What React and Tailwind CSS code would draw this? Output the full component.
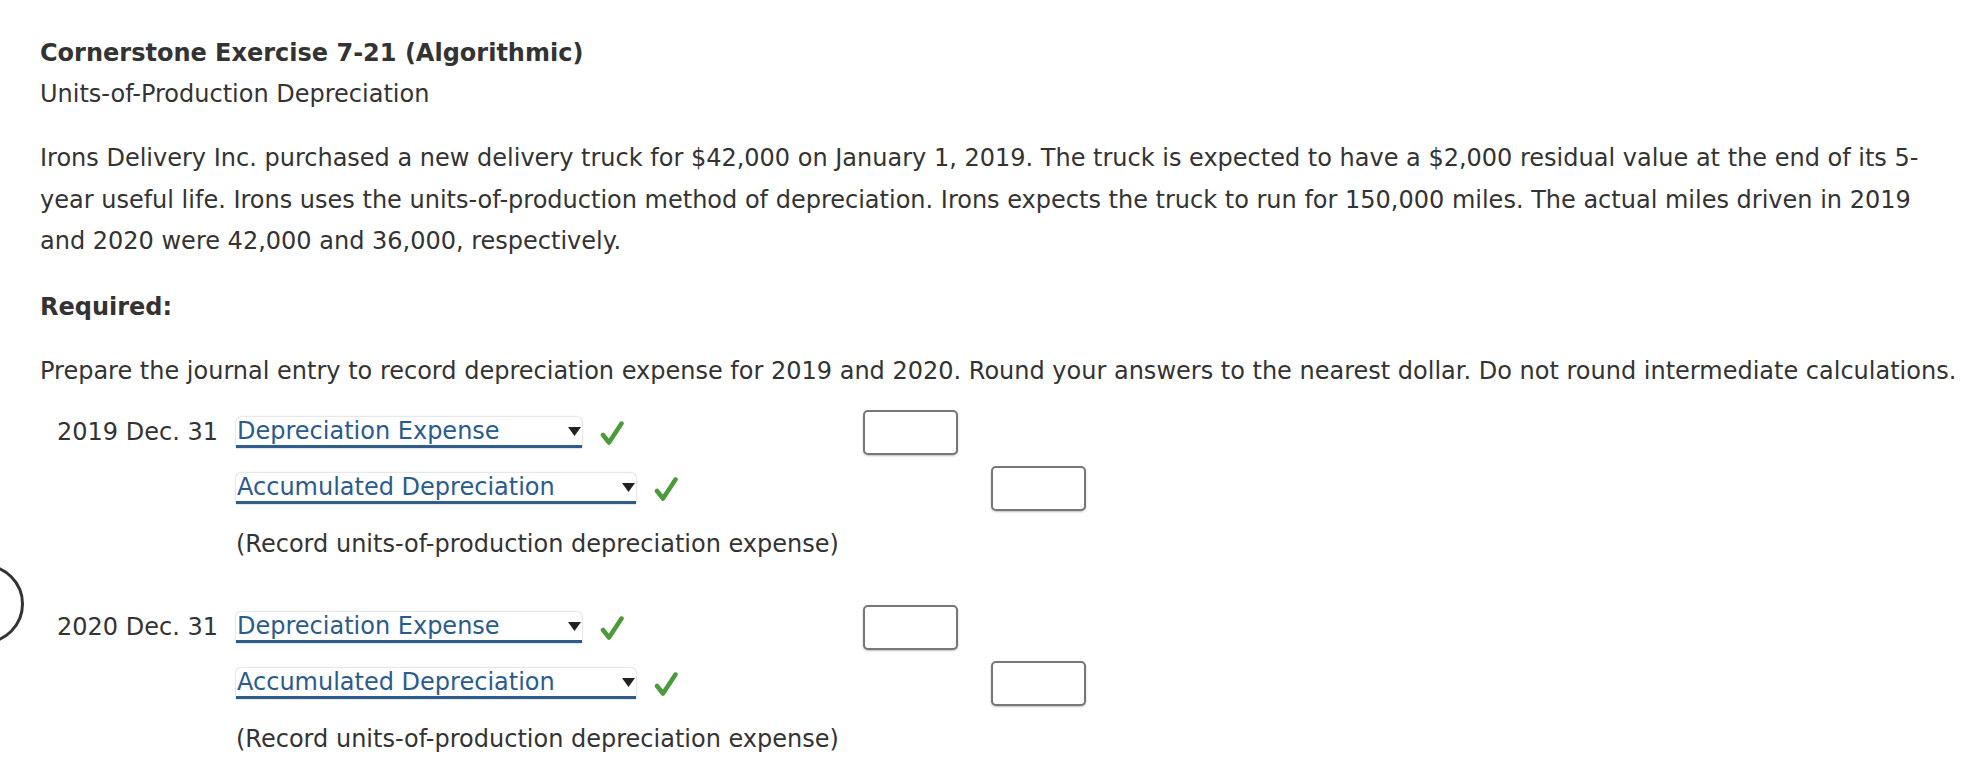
const Check = () => (
  <svg width="24" height="26" viewBox="0 0 24 26" className="shrink-0">
    <path
      d="M3 15 L9 22.5 L21.5 3.5"
      fill="none"
      stroke="#4b9a3c"
      strokeWidth="4.5"
      strokeLinecap="round"
      strokeLinejoin="round"
    />
  </svg>
);

const Select = ({ label, width }) => (
  <div
    className={`flex h-[31px] items-center justify-between rounded-t-[5px] border-b-[3px] border-[#2e5d8c] bg-white shadow-[0_0_2px_rgba(0,0,0,0.35)] ${width}`}
  >
    <span className="pl-[1px] text-[24px] leading-[28px] text-[#2a5b8d]">{label}</span>
    <svg width="13" height="9" viewBox="0 0 13 9" className="mr-[1px]">
      <path d="M0 0 H13 L6.5 9 Z" fill="#222" />
    </svg>
  </div>
);

const AmountBox = () => (
  <div className="h-[45px] w-[95px] rounded-[5px] border-2 border-[#777] bg-white shadow-[0_1px_2px_rgba(0,0,0,0.25)]" />
);

const Entry = ({ year }) => (
  <div className="grid grid-cols-[179px_627px_128px_95px] ml-[17px]">
    <div className="flex h-[56px] items-center whitespace-nowrap">{year} Dec. 31</div>
    <div className="flex h-[56px] items-center gap-[18px]">
      <Select label="Depreciation Expense" width="w-[346px]" />
      <Check />
    </div>
    <div className="flex h-[56px] items-center">
      <AmountBox />
    </div>
    <div />

    <div />
    <div className="flex h-[56px] items-center gap-[18px]">
      <Select label="Accumulated Depreciation" width="w-[400px]" />
      <Check />
    </div>
    <div />
    <div className="flex h-[56px] items-center">
      <AmountBox />
    </div>

    <div />
    <div className="col-span-3 flex h-[56px] items-center whitespace-nowrap">
      (Record units-of-production depreciation expense)
    </div>
  </div>
);

export default function App() {
  return (
    <div
      className="relative h-[760px] w-[1984px] overflow-hidden bg-white pl-10 pt-[33px] text-[24px] leading-[41px] text-[#333]"
      style={{ fontFamily: '"DejaVu Sans", Verdana, sans-serif' }}
    >
      <div className="absolute left-[-56px] top-[564px] h-[80px] w-[80px] rounded-full border-[3px] border-[#333]" />

      <h1 className="font-bold">Cornerstone Exercise 7-21 (Algorithmic)</h1>
      <p>Units-of-Production Depreciation</p>

      <p className="mt-[23px] whitespace-nowrap leading-[41.5px]">
        <span className="block">
          Irons Delivery Inc. purchased a new delivery truck for $42,000 on January 1, 2019. The truck is
          expected to have a $2,000 residual value at the end of its 5-
        </span>
        <span className="block">
          year useful life. Irons uses the units-of-production method of depreciation. Irons expects the
          truck to run for 150,000 miles. The actual miles driven in 2019
        </span>
        <span className="block">and 2020 were 42,000 and 36,000, respectively.</span>
      </p>

      <p className="mt-[24px] font-bold">Required:</p>

      <p className="mt-[23px] whitespace-nowrap">
        Prepare the journal entry to record depreciation expense for 2019 and 2020. Round your answers to
        the nearest dollar. Do not round intermediate calculations.
      </p>

      <div className="mt-[13px]">
        <Entry year="2019" />
      </div>
      <div className="mt-[27px]">
        <Entry year="2020" />
      </div>
    </div>
  );
}
